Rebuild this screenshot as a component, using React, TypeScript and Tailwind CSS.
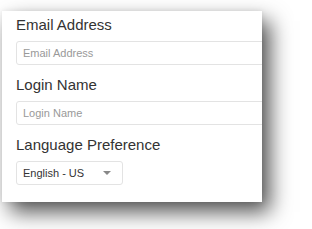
import React from "react"

const fieldFont = { fontFamily: '"Liberation Sans", Arial, sans-serif' }

function Field({ label, placeholder }: { label: string; placeholder: string }) {
  return (
    <div className="mb-[10px]">
      <label className="block text-[15px] leading-5 text-[#333]">{label}</label>
      <input
        placeholder={placeholder}
        className="mt-1.5 block h-6 w-[300px] rounded-[3px] border border-[#e3e3e3] px-[6px] text-[11px] text-[#333] outline-none placeholder:text-[#999]"
      />
    </div>
  )
}

export default function App() {
  return (
    <div className="h-[229px] w-[312px] bg-white pl-[2px] pt-[11px]" style={fieldFont}>
      <div className="h-[191px] w-[260px] overflow-hidden bg-white pl-[14px] pt-1 shadow-[0_0_6px_rgba(0,0,0,0.08),8px_10px_20px_rgba(0,0,0,0.68)]">
        <Field label="Email Address" placeholder="Email Address" />
        <Field label="Login Name" placeholder="Login Name" />
        <div>
          <label className="block text-[15px] leading-5 text-[#333]">Language Preference</label>
          <button className="mt-1.5 flex h-6 w-[107px] items-center justify-between rounded-[3px] border border-[#e3e3e3] pl-[6px] pr-[11px] text-[11px] text-[#333]">
            <span>English - US</span>
            <svg width="8" height="4" viewBox="0 0 8 4">
              <path d="M0 0h8L4 4z" fill="#888" />
            </svg>
          </button>
        </div>
      </div>
    </div>
  )
}
